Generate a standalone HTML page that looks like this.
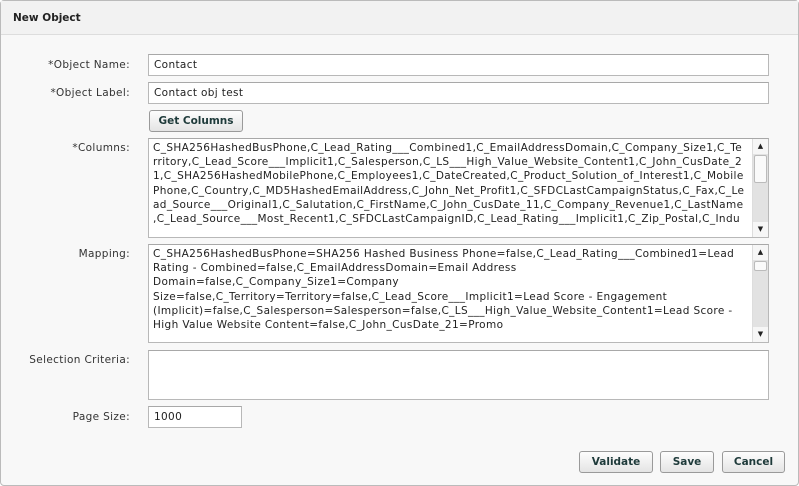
<!DOCTYPE html>
<html><head><style>
*{box-sizing:border-box;margin:0;padding:0}
body{width:799px;height:486px;overflow:hidden;background:#fff;font-family:"DejaVu Sans","Liberation Sans",sans-serif;font-size:10.5px;color:#222;letter-spacing:0.35px}
.win{position:absolute;left:0;top:0;width:799px;height:486px;border:1px solid #bbb;border-radius:4px;background:#f8f8f8}
.hdr{position:absolute;left:0;top:0;width:797px;height:34px;background:#f2f2f2;border-bottom:1px solid #ddd;font-weight:bold;font-size:10.5px;padding:11px 0 0 12px;color:#222;letter-spacing:0}
.lbl{position:absolute;right:668px;text-align:right;color:#333;white-space:nowrap}
.box{position:absolute;background:#fff;border:1px solid #b8b8b8;border-top-color:#a8a8a8}
.inp{padding:4px 0 0 5px;color:#222}
.ta{padding:2px 0 0 4px;line-height:14.2px;overflow:hidden;letter-spacing:0.37px}
.ln{white-space:nowrap;overflow:hidden;width:598px}
.sb{position:absolute;right:0;top:0;bottom:0;width:16px;background:#e2e2e2;border-left:1px solid #ddd}
.up,.dn{position:absolute;left:0;width:15px;height:15px;background:#f6f6f6;font-size:7px;text-align:center;line-height:15px;color:#222;letter-spacing:0}
.up{top:0}.dn{bottom:0}
.th{position:absolute;left:1px;width:13px;background:#fafafa;border:1px solid #bbb;border-radius:2px}
.btn{position:absolute;height:22px;border:1px solid #9a9a9a;border-radius:3px;background:linear-gradient(#fdfdfd,#e4e4e4);font-weight:bold;color:#1e3a3a;text-align:center;line-height:20px;font-size:10.5px;letter-spacing:0}
</style></head><body>
<div class="win">
<div class="hdr">New Object</div>

<div class="lbl" style="top:58px">*Object Name:</div>
<div class="box inp" style="left:147px;top:53px;width:621px;height:22px">Contact</div>
<div class="lbl" style="top:86px">*Object Label:</div>
<div class="box inp" style="left:147px;top:81px;width:621px;height:22px">Contact obj test</div>
<div class="btn" style="left:148px;top:109px;width:94px">Get Columns</div>

<div class="lbl" style="top:141px">*Columns:</div>
<div class="box ta" style="left:147px;top:137px;width:621px;height:100px">
<div class="ln">C_SHA256HashedBusPhone,C_Lead_Rating___Combined1,C_EmailAddressDomain,C_Company_Size1,C_Te</div>
<div class="ln">rritory,C_Lead_Score___Implicit1,C_Salesperson,C_LS___High_Value_Website_Content1,C_John_CusDate_2</div>
<div class="ln">1,C_SHA256HashedMobilePhone,C_Employees1,C_DateCreated,C_Product_Solution_of_Interest1,C_Mobile</div>
<div class="ln">Phone,C_Country,C_MD5HashedEmailAddress,C_John_Net_Profit1,C_SFDCLastCampaignStatus,C_Fax,C_Le</div>
<div class="ln">ad_Source___Original1,C_Salutation,C_FirstName,C_John_CusDate_11,C_Company_Revenue1,C_LastName</div>
<div class="ln">,C_Lead_Source___Most_Recent1,C_SFDCLastCampaignID,C_Lead_Rating___Implicit1,C_Zip_Postal,C_Indu</div>
<div class="sb"><div class="up">▲</div><div class="th" style="top:16px;height:28px"></div><div class="dn">▼</div></div>
</div>

<div class="lbl" style="top:247px">Mapping:</div>
<div class="box ta" style="left:147px;top:243px;width:621px;height:99px">
<div class="ln">C_SHA256HashedBusPhone=SHA256 Hashed Business Phone=false,C_Lead_Rating___Combined1=Lead</div>
<div class="ln">Rating - Combined=false,C_EmailAddressDomain=Email Address</div>
<div class="ln">Domain=false,C_Company_Size1=Company</div>
<div class="ln">Size=false,C_Territory=Territory=false,C_Lead_Score___Implicit1=Lead Score - Engagement</div>
<div class="ln">(Implicit)=false,C_Salesperson=Salesperson=false,C_LS___High_Value_Website_Content1=Lead Score -</div>
<div class="ln">High Value Website Content=false,C_John_CusDate_21=Promo</div>
<div class="sb"><div class="up">▲</div><div class="th" style="top:16px;height:10px"></div><div class="dn">▼</div></div>
</div>

<div class="lbl" style="top:353px">Selection Criteria:</div>
<div class="box" style="left:147px;top:349px;width:621px;height:50px"></div>

<div class="lbl" style="top:410px">Page Size:</div>
<div class="box inp" style="left:147px;top:405px;width:94px;height:22px">1000</div>

<div class="btn" style="left:578px;top:450px;width:74px">Validate</div>
<div class="btn" style="left:659px;top:450px;width:54px">Save</div>
<div class="btn" style="left:721px;top:450px;width:63px">Cancel</div>
</div>
</body></html>
